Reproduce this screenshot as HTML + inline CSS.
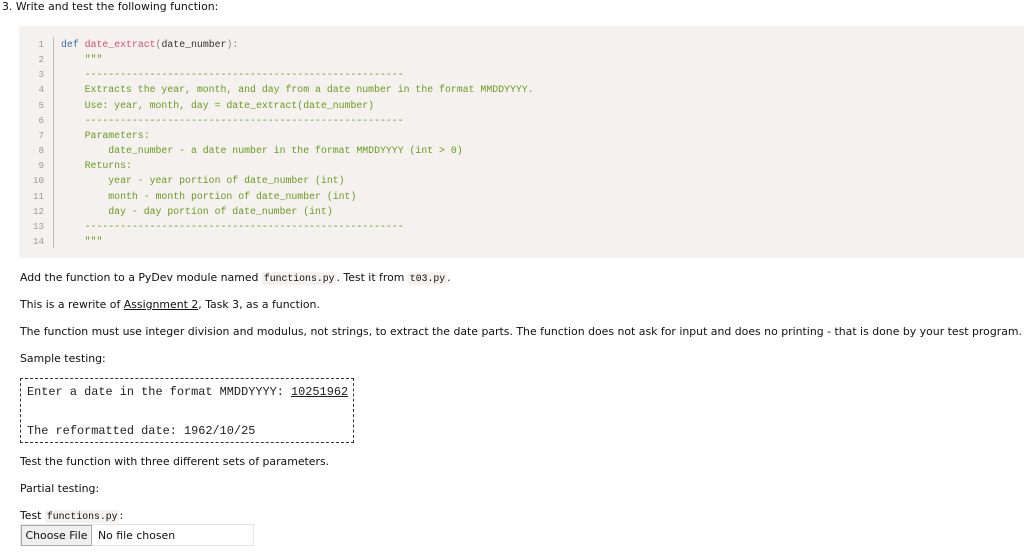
<!DOCTYPE html>
<html><head><meta charset="utf-8"><style>
body{margin:0;width:1024px;height:552px;overflow:hidden;background:#fff;font-family:"DejaVu Sans","Liberation Sans",sans-serif;font-size:10.9px;color:#111;position:relative}
.t{position:absolute;white-space:nowrap;line-height:14px}
.code{position:absolute;left:19px;top:26px;width:1005px;height:232px;background:#f4f1ee}
.sep{position:absolute;left:53px;top:37px;width:1px;height:211px;background:#bbb}
.ln{position:absolute;left:30px;width:14px;text-align:right;font-family:"Liberation Mono",monospace;font-size:9.2px;color:#999;line-height:15.15px}
.cl{position:absolute;left:61px;font-family:"Liberation Mono",monospace;font-size:9.85px;white-space:pre;line-height:15.15px;color:#6b9a22}
.k{color:#3d6fa8}.f{color:#d4506e}.d{color:#333}.p{color:#888}
code{font-family:"Liberation Mono",monospace;font-size:9.8px;background:#f4f1ee;padding:1px 2px;border-radius:2px}
.box{position:absolute;left:20px;top:378px;width:332px;height:63px;border:1px dashed #333;font-family:"Liberation Mono",monospace;font-size:11.9px;color:#222}
.fi{position:absolute;left:20px;top:524px;width:234px;height:22px;border:1px solid #e4e4e4;box-sizing:border-box}
.btn{position:absolute;left:0;top:0;width:71px;height:21px;background:#efefef;border:1px solid #aaa;box-sizing:border-box;font-size:10.9px;line-height:19px;text-align:center}
</style></head><body>
<div class="t" style="left:2px;top:0px">3. Write and test the following function:</div>
<div class="code"></div>
<div class="sep"></div>
<div class="ln" style="top:37px">1<br>2<br>3<br>4<br>5<br>6<br>7<br>8<br>9<br>10<br>11<br>12<br>13<br>14</div>
<div class="cl" style="top:37px"><span class="k">def</span> <span class="f">date_extract</span><span class="p">(</span><span class="d">date_number</span><span class="p">):</span>
    """
    ------------------------------------------------------
    Extracts the year, month, and day from a date number in the format MMDDYYYY.
    Use: year, month, day = date_extract(date_number)
    ------------------------------------------------------
    Parameters:
        date_number - a date number in the format MMDDYYYY (int &gt; 0)
    Returns:
        year - year portion of date_number (int)
        month - month portion of date_number (int)
        day - day portion of date_number (int)
    ------------------------------------------------------
    """</div>
<div class="t" style="left:20px;top:271px">Add the function to a PyDev module named <code>functions.py</code>. Test it from <code>t03.py</code>.</div>
<div class="t" style="left:20px;top:298px">This is a rewrite of <u>Assignment 2</u>, Task 3, as a function.</div>
<div class="t" style="left:20px;top:325px">The function must use integer division and modulus, not strings, to extract the date parts. The function does not ask for input and does no printing - that is done by your test program.</div>
<div class="t" style="left:20px;top:352px">Sample testing:</div>
<div class="box"><div class="t" style="left:6px;top:6px">Enter a date in the format MMDDYYYY: <u>10251962</u></div><div class="t" style="left:6px;top:45px">The reformatted date: 1962/10/25</div></div>
<div class="t" style="left:20px;top:455px">Test the function with three different sets of parameters.</div>
<div class="t" style="left:20px;top:482px">Partial testing:</div>
<div class="t" style="left:20px;top:509px">Test <code>functions.py</code>:</div>
<div class="fi"><div class="btn">Choose File</div><div class="t" style="left:77px;top:4px">No file chosen</div></div>
</body></html>
